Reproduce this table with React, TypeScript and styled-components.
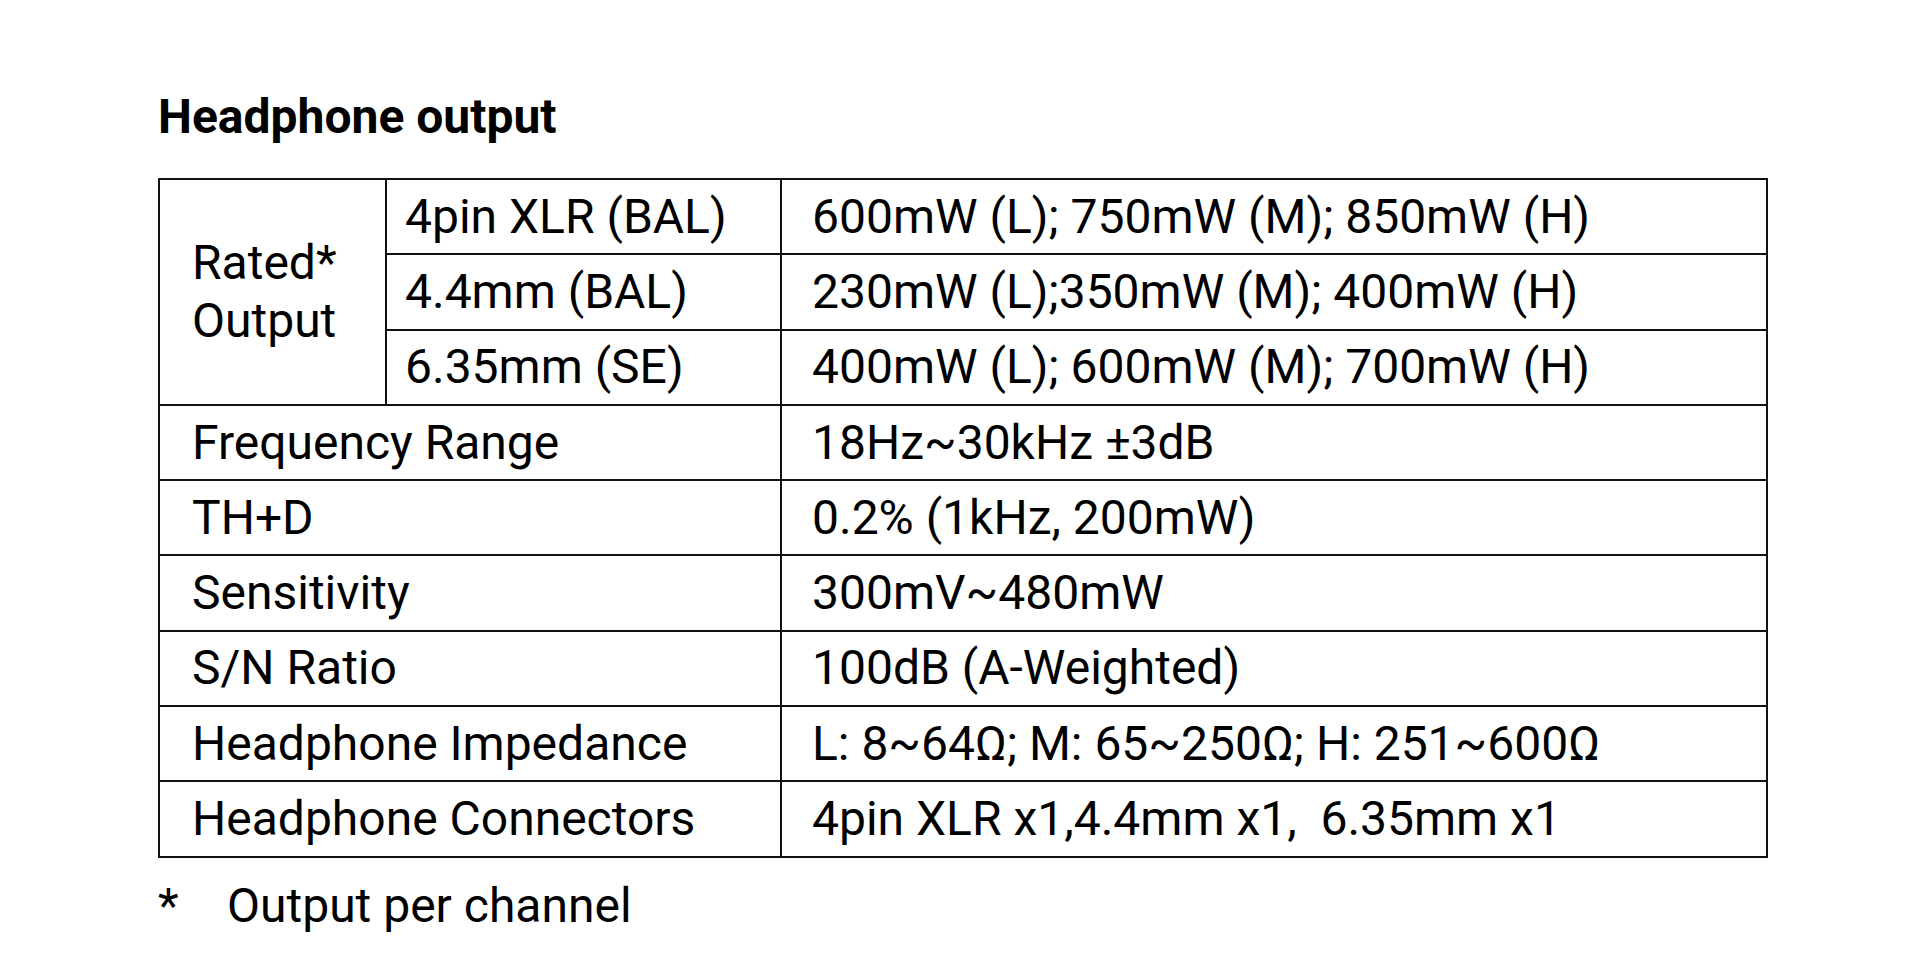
import { createGlobalStyle } from 'styled-components';
import styled from 'styled-components';

const GlobalStyle = createGlobalStyle`
    html, body {
        margin: 0;
        padding: 0;
        background: #ffffff;
    }
    body {
        font-family: Roboto, "Liberation Sans", Arial, sans-serif;
        color: #000000;
    }
`;

const ratedRows = [
    { port: '4pin XLR (BAL)', value: '600mW (L); 750mW (M); 850mW (H)' },
    { port: '4.4mm (BAL)', value: '230mW (L);350mW (M); 400mW (H)' },
    { port: '6.35mm (SE)', value: '400mW (L); 600mW (M); 700mW (H)' },
];

const specRows = [
    { label: 'Frequency Range', value: '18Hz~30kHz ±3dB' },
    { label: 'TH+D', value: '0.2% (1kHz, 200mW)' },
    { label: 'Sensitivity', value: '300mV~480mW' },
    { label: 'S/N Ratio', value: '100dB (A-Weighted)' },
    { label: 'Headphone Impedance', value: 'L: 8~64Ω; M: 65~250Ω; H: 251~600Ω' },
    { label: 'Headphone Connectors', value: '4pin XLR x1,4.4mm x1,  6.35mm x1' },
];

export default function App() {
    return (
        <Page>
            <GlobalStyle />
            <Title>Headphone output</Title>
            <SpecTable>
                <colgroup>
                    <col style={{ width: 227 }} />
                    <col style={{ width: 395 }} />
                    <col />
                </colgroup>
                <tbody>
                    {ratedRows.map((row, i) => (
                        <Row key={row.port}>
                            {i === 0 && (
                                <Cell rowSpan={3} $pad={32}>
                                    <Stacked>
                                        Rated*
                                        <br />
                                        Output
                                    </Stacked>
                                </Cell>
                            )}
                            <Cell $pad={18}>{row.port}</Cell>
                            <Cell $pad={30}>{row.value}</Cell>
                        </Row>
                    ))}
                    {specRows.map((row) => (
                        <Row key={row.label}>
                            <Cell colSpan={2} $pad={32}>{row.label}</Cell>
                            <Cell $pad={30}>{row.value}</Cell>
                        </Row>
                    ))}
                </tbody>
            </SpecTable>
            <Footnote>
                <Star>*</Star>
                <span>Output per channel</span>
            </Footnote>
        </Page>
    );
}

const Page = styled.div`
    padding: 89px 0 0 158px;
    width: 1610px;
`;

const Title = styled.h2`
    margin: 0 0 33px 0;
    font-size: 48px;
    line-height: 56px;
    font-weight: 700;
    white-space: nowrap;
`;

const SpecTable = styled.table`
    width: 1610px;
    border-collapse: collapse;
    table-layout: fixed;
    border: 2px solid #111111;
`;

const Row = styled.tr`
    height: 75.3px;
`;

const Cell = styled.td<{ $pad: number }>`
    border: 2px solid #111111;
    padding: 0 0 0 ${(p) => p.$pad}px;
    font-size: 48px;
    line-height: 56px;
    font-weight: 400;
    vertical-align: middle;
    white-space: pre;
`;

const Stacked = styled.div`
    line-height: 58px;
    white-space: nowrap;
`;

const Footnote = styled.div`
    display: flex;
    margin-top: 20px;
    font-size: 48px;
    line-height: 56px;
`;

const Star = styled.span`
    width: 69px;
`;
